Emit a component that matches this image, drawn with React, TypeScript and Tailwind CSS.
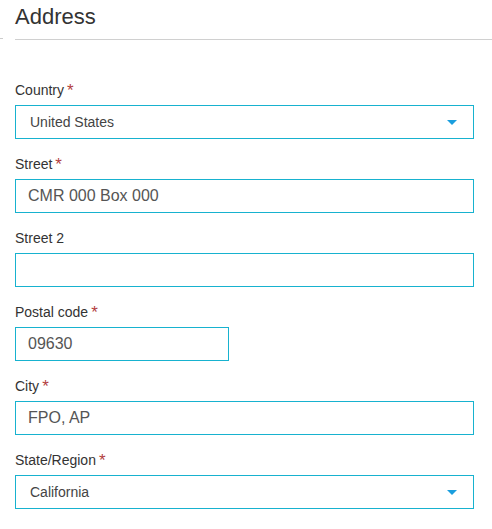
import React from "react"

const cyan = "border-[#17b2cf]"

function Label({ text, required }: { text: string; required?: boolean }) {
  return (
    <label className="block h-[20px] leading-[20px] text-[14px] text-[#333] mb-[5px]">
      {text}
      {required && (
        <span className="ml-[3px] text-[17px] leading-none align-[-1px] text-[#b3403f]">*</span>
      )}
    </label>
  )
}

function TextField({ label, value, required, narrow }: { label: string; value: string; required?: boolean; narrow?: boolean }) {
  return (
    <div className="mb-[15px]">
      <Label text={label} required={required} />
      <div className={`h-[34px] border ${cyan} flex items-center pl-[12px] text-[16px] text-[#555] ${narrow ? "w-[214px]" : "w-full"}`}>
        {value}
      </div>
    </div>
  )
}

function SelectField({ label, value, required }: { label: string; value: string; required?: boolean }) {
  return (
    <div className="mb-[15px]">
      <Label text={label} required={required} />
      <div className={`h-[34px] border ${cyan} flex items-center justify-between pl-[14px] pr-[16px] text-[14px] text-[#444]`}>
        <span>{value}</span>
        <svg width="10" height="5" viewBox="0 0 10 5" className="shrink-0">
          <path d="M0 0 H10 L5 5 Z" fill="#1a9ede" />
        </svg>
      </div>
    </div>
  )
}

export default function App() {
  return (
    <div className="w-[492px] h-[529px] bg-white overflow-hidden relative" style={{ fontFamily: '"Liberation Sans", Arial, sans-serif' }}>
      {/* stray rule from neighbouring panel */}
      <div className="absolute left-0 top-[38px] w-[3px] h-px bg-[#ccc]" />

      <div className="pl-[15px]">
        <h2 className="pt-[4px] pb-[9px] leading-[26px] text-[22px] text-[#333] border-b border-[#d0d0d0]">
          Address
        </h2>

        <div className="mt-[40px] mr-[18px]">
          <SelectField label="Country" value="United States" required />
          <TextField label="Street" value="CMR 000 Box 000" required />
          <TextField label="Street 2" value="" />
          <TextField label="Postal code" value="09630" required narrow />
          <TextField label="City" value="FPO, AP" required />
          <SelectField label="State/Region" value="California" required />
        </div>
      </div>
    </div>
  )
}
